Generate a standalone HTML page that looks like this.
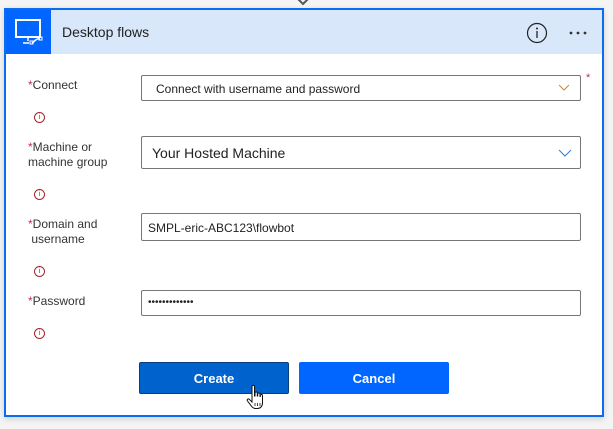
<!DOCTYPE html>
<html><head><style>
body{margin:0;width:613px;height:429px;background:#f4f4f4;font-family:"Liberation Sans",sans-serif;position:relative;overflow:hidden}
.card{position:absolute;left:4px;top:8px;width:596px;height:405px;border:2px solid #0b6cf0;background:#fff;box-shadow:0 2px 6px rgba(0,0,0,.15)}
.hdr{position:absolute;left:0;top:0;width:596px;height:44px;background:#d9e7fb}
.ico{position:absolute;left:0;top:0;width:45px;height:44px;background:#0066ff}
.title{position:absolute;left:56px;top:14px;font-size:14px;color:#222}
.lbl{position:absolute;left:22px;font-size:12px;color:#333;line-height:15px}
.lbl b{color:#c4314b;font-weight:normal}
.i{position:absolute;left:28px;width:9px;height:9px;border:1px solid #a4262c;border-radius:50%;font-size:7px;color:#a4262c;text-align:center;line-height:9px}
.f{position:absolute;left:135px;width:440px;border:1px solid #777;border-radius:2px;background:#fff;color:#222;box-sizing:border-box}
.btn{position:absolute;top:352px;width:150px;height:32px;color:#fff;font-weight:bold;font-size:13px;text-align:center;line-height:32px;border-radius:2px;box-sizing:border-box}
</style></head><body>
<svg style="position:absolute;left:295px;top:-4px" width="16" height="12"><path d="M2 2 L8 8 L14 2" stroke="#555" stroke-width="2" fill="none"/></svg>
<div class="card">
<div class="hdr">
<div class="ico"><svg width="45" height="44"><rect x="10" y="10" width="24" height="17" fill="none" stroke="#fff" stroke-width="2"/><path d="M22 27v4M17 33h6M26 33l5-4M31 29h3" stroke="#fff" stroke-width="1.5" fill="none"/><rect x="24" y="31" width="3" height="3" fill="none" stroke="#fff"/><rect x="33" y="27" width="3" height="3" fill="none" stroke="#fff"/></svg></div>
<div class="title">Desktop flows</div>
<svg style="position:absolute;left:520px;top:12px" width="22" height="22"><circle cx="11" cy="11" r="9.5" fill="none" stroke="#222" stroke-width="1.2"/><circle cx="11" cy="6.5" r="1" fill="#222"/><path d="M11 9v7" stroke="#222" stroke-width="1.3"/></svg>
<svg style="position:absolute;left:563px;top:20px" width="22" height="6"><circle cx="2" cy="3" r="1.4" fill="#333"/><circle cx="9" cy="3" r="1.4" fill="#333"/><circle cx="16" cy="3" r="1.4" fill="#333"/></svg>
</div>
<div class="lbl" style="top:68px"><b>*</b>Connect</div>
<div class="i" style="top:102px">i</div>
<div class="f" style="top:65px;height:26px;font-size:12px;padding:6px 0 0 14px">Connect with username and password<svg style="position:absolute;right:10px;top:8px" width="12" height="8"><path d="M1 1l5 5 5-5" stroke="#c8873a" fill="none"/></svg></div>
<div style="position:absolute;left:580px;top:62px;color:#c4314b;font-size:11px">*</div>
<div class="lbl" style="top:130px"><b>*</b>Machine or<br>machine group</div>
<div class="i" style="top:179px">i</div>
<div class="f" style="top:126px;height:33px;font-size:14px;padding:8px 0 0 10px">Your Hosted Machine<svg style="position:absolute;right:8px;top:12px" width="14" height="8"><path d="M1 1l6 6 6-6" stroke="#2b7cd3" fill="none"/></svg></div>
<div class="lbl" style="top:207px"><b>*</b>Domain and<br>&nbsp;username</div>
<div class="i" style="top:256px">i</div>
<div class="f" style="top:203px;height:28px;font-size:12px;padding:7px 0 0 6px">SMPL-eric-ABC123\flowbot</div>
<div class="lbl" style="top:284px"><b>*</b>Password</div>
<div class="i" style="top:318px">i</div>
<div class="f" style="top:280px;height:26px;font-size:10px;padding:6px 0 0 6px;letter-spacing:0px">•••••••••••••</div>
<div class="btn" style="left:133px;background:#0062cc;border:1px solid #0a3d7a">Create</div>
<div class="btn" style="left:293px;background:#0066ff;line-height:33px">Cancel</div>
<svg style="position:absolute;left:240px;top:374px" width="20" height="28" viewBox="0 0 20 28"><path d="M6 2.5c0-1.5 2.5-1.5 2.5 0V12h0.5V9c0-1.4 2.3-1.4 2.3 0v3h.4v-2c0-1.4 2.3-1.4 2.3 0v2.5h.3v-1c0-1.4 2.2-1.4 2.2 0V19c0 3-2 5.5-5 5.5H9.5c-2 0-3-1-4.3-2.7L1.5 17c-1-1.4.6-2.8 1.8-1.7L6 18z" fill="#fff" stroke="#111" stroke-width="1"/><path d="M9 19v3M11.5 19v3M14 19v3" stroke="#111" stroke-width=".8"/></svg>
</div>
</body></html>
